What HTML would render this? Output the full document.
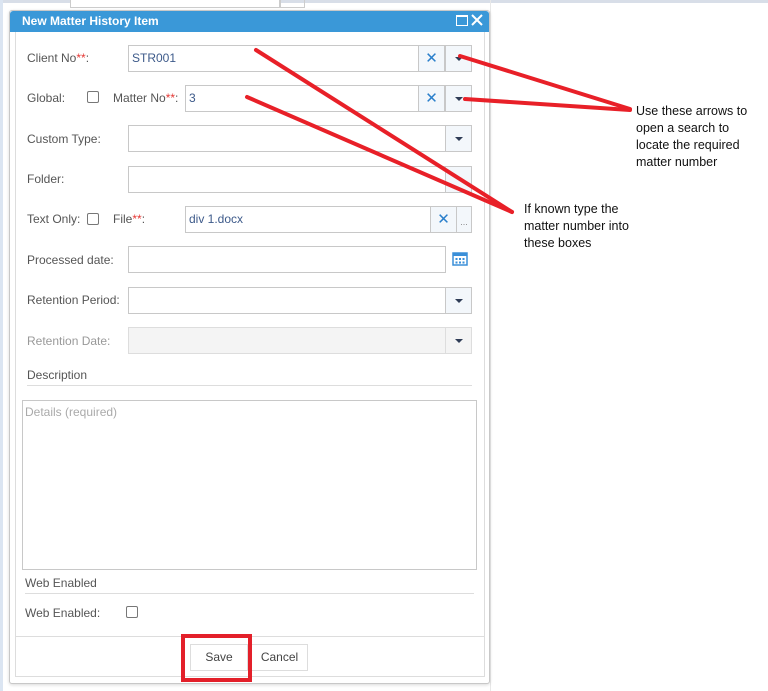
<!DOCTYPE html>
<html><head><style>
*{box-sizing:border-box;margin:0;padding:0}
body{width:768px;height:691px;position:relative;background:#fff;font-family:"Liberation Sans",sans-serif;font-size:12px;color:#555;overflow:hidden}
.a{position:absolute}
.lbl{position:absolute;font-size:12px;color:#555;line-height:14px}
.req{color:#e53935}
.inp{position:absolute;border:1px solid #c8c8c8;background:#fff;height:27px;color:#3d5a8a;font-size:12px;line-height:25px;padding-left:3px}
.btn{position:absolute;border:1px solid #c8c8c8;background:#f3f7fb;height:27px;width:27px;text-align:center;line-height:25px;color:#2a7fcb;font-size:15px}
.dd:after{content:"";position:absolute;left:9px;top:11px;border-left:4px solid transparent;border-right:4px solid transparent;border-top:4px solid #2f3c56}
.cb{position:absolute;width:12px;height:12px;border:1px solid #777;border-radius:2px;background:#fff}
.note{position:absolute;font-family:"Liberation Sans",sans-serif;font-size:12.5px;color:#111;line-height:17px}
</style></head><body>
<div class="a" style="left:0;top:0;width:768px;height:3px;background:#d8dee8"></div>
<div class="a" style="left:0;top:0;width:3px;height:691px;background:#dbe5f2"></div>
<div class="a" style="left:70px;top:0;width:210px;height:8px;border:1px solid #ccc;border-top:none;background:#fff"></div>
<div class="a" style="left:280px;top:0;width:25px;height:8px;border:1px solid #ccc;border-top:none"></div>
<div class="a" style="left:490px;top:0;width:1px;height:691px;background:#e8e8e8"></div>
<!-- dialog -->
<div class="a" style="left:9px;top:10px;width:481px;height:674px;border:1px solid #c8c8c8;border-radius:3px;background:#fff;box-shadow:0 1px 3px rgba(0,0,0,.15)"></div>
<div class="a" style="left:10px;top:11px;width:479px;height:21px;background:#3a98d8;border-radius:3px 3px 0 0"></div>
<div class="a" style="left:22px;top:14px;color:#fff;font-weight:bold;font-size:12px;line-height:14px">New Matter History Item</div>
<div class="a" style="left:456px;top:15px;width:12px;height:11px;border:1.5px solid #fff;border-top-width:2.5px"></div>
<svg class="a" style="left:471px;top:14px" width="12" height="12"><path d="M1 1L11 11M11 1L1 11" stroke="#fff" stroke-width="2"/></svg>
<div class="a" style="left:15px;top:32px;width:470px;height:645px;border:1px solid #ddd;border-top:none"></div>

<div class="lbl" style="left:27px;top:51px">Client No<span class="req">**</span>:</div>
<div class="inp" style="left:128px;top:45px;width:291px">STR001</div>
<div class="btn" style="left:418px;top:45px">✕</div><div class="btn dd" style="left:445px;top:45px"></div>

<div class="lbl" style="left:27px;top:91px">Global:</div>
<div class="cb" style="left:87px;top:91px"></div>
<div class="lbl" style="left:113px;top:91px">Matter No<span class="req">**</span>:</div>
<div class="inp" style="left:185px;top:85px;width:234px">3</div>
<div class="btn" style="left:418px;top:85px">✕</div><div class="btn dd" style="left:445px;top:85px"></div>

<div class="lbl" style="left:27px;top:132px">Custom Type:</div>
<div class="inp" style="left:128px;top:125px;width:318px"></div>
<div class="btn dd" style="left:445px;top:125px"></div>

<div class="lbl" style="left:27px;top:172px">Folder:</div>
<div class="inp" style="left:128px;top:166px;width:318px"></div>
<div class="btn" style="left:445px;top:166px"></div>

<div class="lbl" style="left:27px;top:212px">Text Only:</div>
<div class="cb" style="left:87px;top:213px"></div>
<div class="lbl" style="left:113px;top:212px">File<span class="req">**</span>:</div>
<div class="inp" style="left:185px;top:206px;width:246px">div 1.docx</div>
<div class="btn" style="left:430px;top:206px">✕</div>
<div class="btn" style="left:456px;top:206px;width:16px;font-size:9px;color:#888;line-height:30px">...</div>

<div class="lbl" style="left:27px;top:253px">Processed date:</div>
<div class="inp" style="left:128px;top:246px;width:318px"></div>
<svg class="a" style="left:452px;top:251px" width="16" height="15" viewBox="0 0 16 15"><rect x="1" y="2" width="14" height="12" fill="none" stroke="#3a8fd8" stroke-width="1.5"/><rect x="1" y="2" width="14" height="3" fill="#3a8fd8"/><g fill="#3a8fd8"><rect x="3.5" y="7" width="2" height="2"/><rect x="7" y="7" width="2" height="2"/><rect x="10.5" y="7" width="2" height="2"/><rect x="3.5" y="10.5" width="2" height="2"/><rect x="7" y="10.5" width="2" height="2"/><rect x="10.5" y="10.5" width="2" height="2"/></g></svg>

<div class="lbl" style="left:27px;top:293px">Retention Period:</div>
<div class="inp" style="left:128px;top:287px;width:318px"></div>
<div class="btn dd" style="left:445px;top:287px"></div>

<div class="lbl" style="left:27px;top:334px;color:#999">Retention Date:</div>
<div class="inp" style="left:128px;top:327px;width:318px;background:#f4f4f4;border-color:#ddd"></div>
<div class="btn dd" style="left:445px;top:327px;background:#f4f4f4;border-color:#ddd"></div>

<div class="lbl" style="left:27px;top:368px">Description</div>
<div class="a" style="left:27px;top:385px;width:445px;height:1px;background:#ddd"></div>
<div class="a" style="left:22px;top:400px;width:455px;height:170px;border:1px solid #c8c8c8"></div>
<div class="lbl" style="left:25px;top:405px;color:#aaa">Details (required)</div>

<div class="lbl" style="left:25px;top:576px">Web Enabled</div>
<div class="a" style="left:25px;top:593px;width:449px;height:1px;background:#ddd"></div>
<div class="lbl" style="left:25px;top:606px">Web Enabled:</div>
<div class="cb" style="left:126px;top:606px"></div>

<div class="a" style="left:15px;top:636px;width:470px;height:1px;background:#ddd"></div>
<div class="a" style="left:190px;top:644px;width:58px;height:27px;border:1px solid #ddd;text-align:center;line-height:25px;color:#444">Save</div>
<div class="a" style="left:251px;top:644px;width:57px;height:27px;border:1px solid #ddd;text-align:center;line-height:25px;color:#444">Cancel</div>
<div class="a" style="left:181px;top:634px;width:71px;height:48px;border:4px solid #e3202a"></div>

<svg class="a" style="left:0;top:0" width="768" height="691">
<g stroke="#e82028" stroke-width="4" stroke-linecap="round" fill="none">
<line x1="460" y1="56" x2="630" y2="109"/>
<line x1="465" y1="99" x2="630" y2="110"/>
<line x1="256" y1="50" x2="512" y2="212"/>
<line x1="247" y1="97" x2="512" y2="212"/>
</g></svg>

<div class="note" style="left:636px;top:103px">Use these arrows to<br>open a search to<br>locate the required<br>matter number</div>
<div class="note" style="left:524px;top:201px">If known type the<br>matter number into<br>these boxes</div>
</body></html>
